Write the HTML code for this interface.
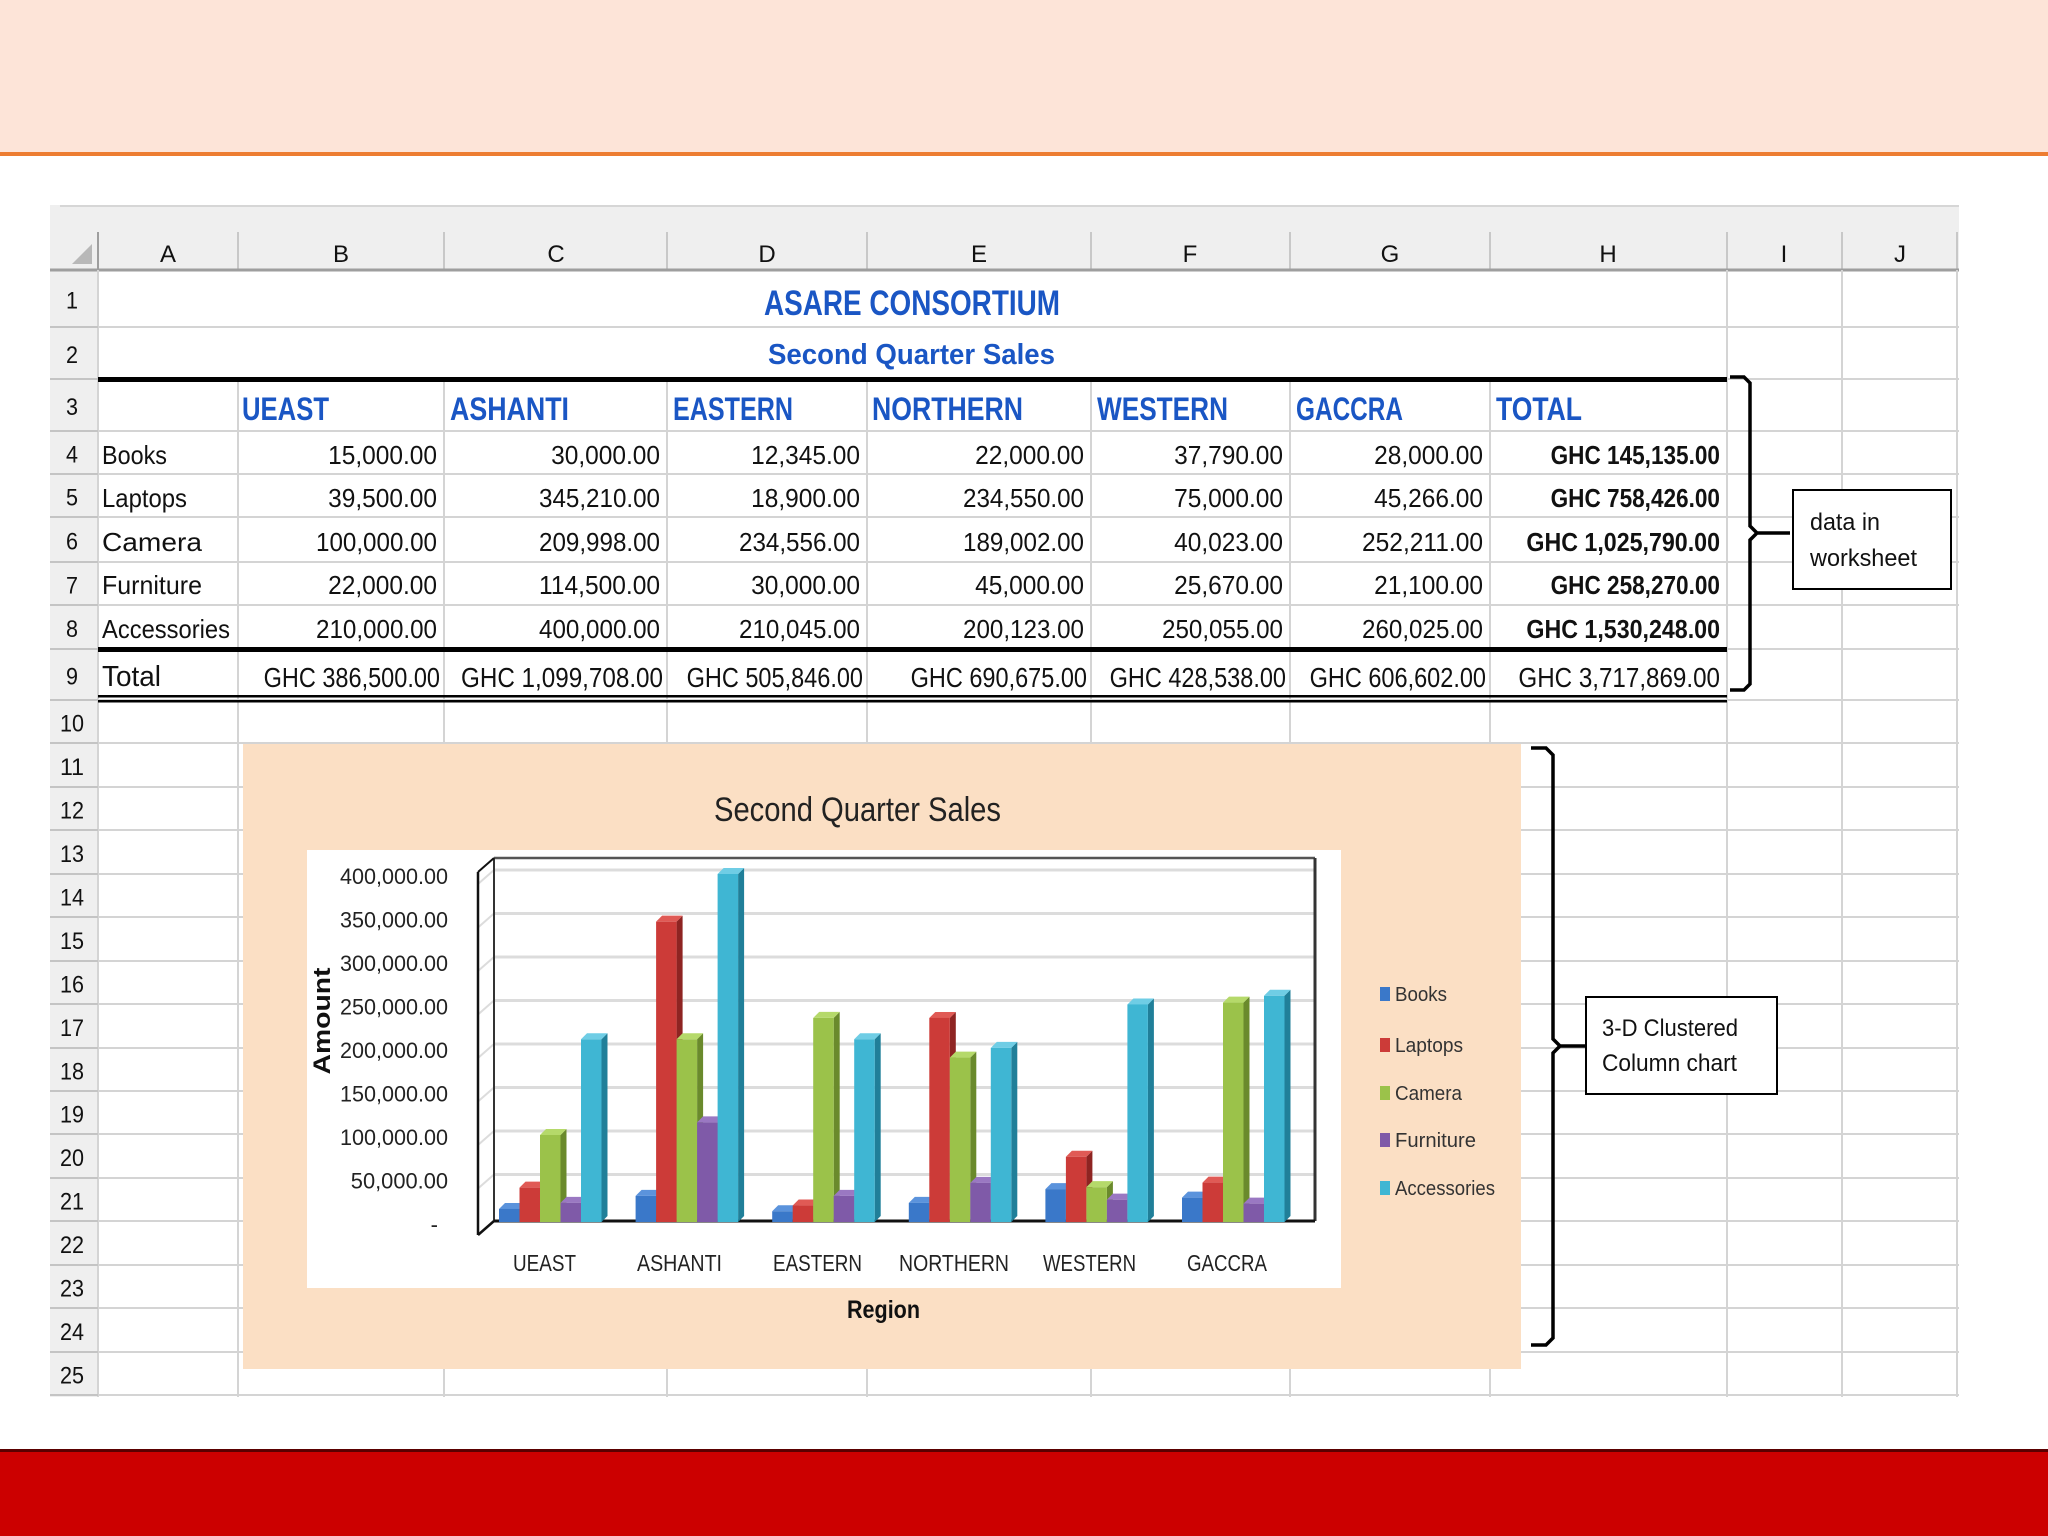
<!DOCTYPE html>
<html><head><meta charset="utf-8"><style>
html,body{margin:0;padding:0;width:2048px;height:1536px;overflow:hidden;background:#fff}
svg{display:block}
text{font-family:"Liberation Sans Narrow","Liberation Sans",sans-serif}
</style></head><body>
<svg id="s" width="2048" height="1536" viewBox="0 0 2048 1536" xmlns="http://www.w3.org/2000/svg">
<rect x="0" y="0" width="2048" height="153" fill="#fde4d8"/>
<rect x="0" y="152" width="2048" height="4" fill="#ed7d31"/>
<rect x="0" y="1450" width="2048" height="86" fill="#cc0000"/>
<rect x="0" y="1449" width="2048" height="3" fill="#5a0000"/>
<rect x="50" y="205" width="1909" height="65" fill="#efefef"/>
<rect x="50" y="270" width="48" height="1127" fill="#efefef"/>
<rect x="98" y="270" width="1861" height="1127" fill="#fff"/>
<polygon points="92,264 92,244 72,264" fill="#b8b8b8"/>
<g id="grid"></g>
<g font-size="24" fill="#111" text-anchor="middle">
<text x="168" y="262">A</text><text x="341" y="262">B</text><text x="556" y="262">C</text><text x="767" y="262">D</text><text x="979" y="262">E</text><text x="1190" y="262">F</text><text x="1390" y="262">G</text><text x="1608" y="262">H</text><text x="1784" y="262">I</text><text x="1900" y="262">J</text>
</g>
<g id="rownums" font-size="24" fill="#111" text-anchor="middle"></g>
<text x="764" y="315" font-size="35" font-weight="bold" fill="#1a56c4" textLength="296" lengthAdjust="spacingAndGlyphs">ASARE CONSORTIUM</text>
<text x="768" y="364" font-size="29" font-weight="bold" fill="#1a56c4" textLength="287" lengthAdjust="spacingAndGlyphs">Second Quarter Sales</text>
<g font-size="32" font-weight="bold" fill="#1a56c4">
<text x="242" y="420" textLength="87" lengthAdjust="spacingAndGlyphs">UEAST</text>
<text x="450" y="420" textLength="119" lengthAdjust="spacingAndGlyphs">ASHANTI</text>
<text x="673" y="420" textLength="120" lengthAdjust="spacingAndGlyphs">EASTERN</text>
<text x="872" y="420" textLength="151" lengthAdjust="spacingAndGlyphs">NORTHERN</text>
<text x="1097" y="420" textLength="131" lengthAdjust="spacingAndGlyphs">WESTERN</text>
<text x="1296" y="420" textLength="107" lengthAdjust="spacingAndGlyphs">GACCRA</text>
<text x="1496" y="420" textLength="86" lengthAdjust="spacingAndGlyphs">TOTAL</text>
</g>
<g font-size="26" fill="#111">
<text x="102" y="464" textLength="65" lengthAdjust="spacingAndGlyphs">Books</text>
<text x="102" y="507" textLength="85" lengthAdjust="spacingAndGlyphs">Laptops</text>
<text x="102" y="551" textLength="100" lengthAdjust="spacingAndGlyphs">Camera</text>
<text x="102" y="594" textLength="100" lengthAdjust="spacingAndGlyphs">Furniture</text>
<text x="102" y="638" textLength="128" lengthAdjust="spacingAndGlyphs">Accessories</text>
<text x="102" y="686" font-size="29" textLength="59" lengthAdjust="spacingAndGlyphs">Total</text>
</g>
<g id="nums" font-size="26" fill="#111" text-anchor="end"></g>
<rect x="243" y="744" width="1278" height="625" fill="#fbdfc4"/>
<rect x="307" y="850" width="1034" height="438" fill="#fff"/>
<text x="714" y="821" font-size="34" fill="#222" textLength="287" lengthAdjust="spacingAndGlyphs">Second Quarter Sales</text>
<g id="plot"></g>
<g font-size="22" fill="#222" text-anchor="end" id="ylab"></g>
<text x="0" y="0" font-size="24" font-weight="bold" fill="#111" text-anchor="middle" textLength="107" lengthAdjust="spacingAndGlyphs" transform="translate(330 1021) rotate(-90)">Amount</text>
<g font-size="23" fill="#222">
<text x="513" y="1271" textLength="63" lengthAdjust="spacingAndGlyphs">UEAST</text>
<text x="637" y="1271" textLength="85" lengthAdjust="spacingAndGlyphs">ASHANTI</text>
<text x="773" y="1271" textLength="89" lengthAdjust="spacingAndGlyphs">EASTERN</text>
<text x="899" y="1271" textLength="110" lengthAdjust="spacingAndGlyphs">NORTHERN</text>
<text x="1043" y="1271" textLength="93" lengthAdjust="spacingAndGlyphs">WESTERN</text>
<text x="1187" y="1271" textLength="80" lengthAdjust="spacingAndGlyphs">GACCRA</text>
</g>
<text x="847" y="1318" font-size="25" font-weight="bold" fill="#111" textLength="73" lengthAdjust="spacingAndGlyphs">Region</text>
<g font-size="20" fill="#333">
<rect x="1380" y="987" width="10" height="14" fill="#3a78c9"/><text x="1395" y="1001" textLength="52" lengthAdjust="spacingAndGlyphs">Books</text>
<rect x="1380" y="1038" width="10" height="14" fill="#cc3b38"/><text x="1395" y="1052" textLength="68" lengthAdjust="spacingAndGlyphs">Laptops</text>
<rect x="1380" y="1086" width="10" height="14" fill="#9bc24a"/><text x="1395" y="1100" textLength="67" lengthAdjust="spacingAndGlyphs">Camera</text>
<rect x="1380" y="1133" width="10" height="14" fill="#7f5aa8"/><text x="1395" y="1147" textLength="81" lengthAdjust="spacingAndGlyphs">Furniture</text>
<rect x="1380" y="1181" width="10" height="14" fill="#3fb6d3"/><text x="1395" y="1195" textLength="100" lengthAdjust="spacingAndGlyphs">Accessories</text>
</g>
<path d="M1730 377 L1744 377 L1750 383 L1750 526 L1757 533 L1790 533 M1757 533 L1750 540 L1750 684 L1744 690 L1730 690" fill="none" stroke="#000" stroke-width="3.5"/>
<rect x="1793" y="490" width="158" height="99" fill="#fff" stroke="#000" stroke-width="2"/>
<text x="1810" y="530" font-size="24" fill="#111" textLength="70" lengthAdjust="spacingAndGlyphs">data in</text>
<text x="1810" y="566" font-size="24" fill="#111" textLength="107" lengthAdjust="spacingAndGlyphs">worksheet</text>
<path d="M1531 748 L1546 748 L1553 755 L1553 1039 L1560 1046 L1585 1046 M1560 1046 L1553 1053 L1553 1338 L1546 1345 L1531 1345" fill="none" stroke="#000" stroke-width="3.5"/>
<rect x="1586" y="997" width="191" height="97" fill="#fff" stroke="#000" stroke-width="2"/>
<text x="1602" y="1036" font-size="24" fill="#111" textLength="136" lengthAdjust="spacingAndGlyphs">3-D Clustered</text>
<text x="1602" y="1071" font-size="24" fill="#111" textLength="135" lengthAdjust="spacingAndGlyphs">Column chart</text>
</svg>
<script>
(function(){
var NS="http://www.w3.org/2000/svg";
function el(p,t,a,txt){var e=document.createElementNS(NS,t);for(var k in a)e.setAttribute(k,a[k]);if(txt!=null)e.textContent=txt;p.appendChild(e);return e;}
var cols=[98,238,444,667,867,1091,1290,1490,1727,1842,1957];
var rows=[270,327,379,431,474,517,562,605,649,700];
for(var k=1;k<=16;k++)rows.push(Math.round(700+43.44*k));
var g=document.getElementById('grid');
cols.forEach(function(x){el(g,'line',{x1:x,y1:232,x2:x,y2:270,stroke:'#c8c8c8','stroke-width':2});});
el(g,'line',{x1:50,y1:270,x2:1959,y2:270,stroke:'#9e9e9e','stroke-width':3});
el(g,'line',{x1:98,y1:232,x2:98,y2:1397,stroke:'#9e9e9e','stroke-width':2});
el(g,'line',{x1:60,y1:206,x2:1959,y2:206,stroke:'#d6d6d6','stroke-width':2});
cols.forEach(function(x,i){var y0=(i>0&&i<8)?379:270;el(g,'line',{x1:x,y1:y0,x2:x,y2:1397,stroke:'#d4d4d4','stroke-width':2});});
rows.forEach(function(y,i){if(i==0)return;el(g,'line',{x1:98,y1:y,x2:1959,y2:y,stroke:'#d4d4d4','stroke-width':2});el(g,'line',{x1:50,y1:y,x2:98,y2:y,stroke:'#c4c4c4','stroke-width':2});});
el(g,'rect',{x:98,y:377,width:1629,height:5,fill:'#000'});
el(g,'rect',{x:98,y:647,width:1629,height:5,fill:'#000'});
el(g,'rect',{x:98,y:695,width:1629,height:2.5,fill:'#000'});
el(g,'rect',{x:98,y:700,width:1629,height:2.5,fill:'#000'});
var rn=document.getElementById('rownums');
for(var i=0;i<rows.length-1;i++){el(rn,'text',{x:72,y:(rows[i]+rows[i+1])/2+10,textLength:String(i+1).length*12,lengthAdjust:'spacingAndGlyphs'},String(i+1));}
var data=[
["15,000.00","30,000.00","12,345.00","22,000.00","37,790.00","28,000.00","GHC 145,135.00"],
["39,500.00","345,210.00","18,900.00","234,550.00","75,000.00","45,266.00","GHC 758,426.00"],
["100,000.00","209,998.00","234,556.00","189,002.00","40,023.00","252,211.00","GHC 1,025,790.00"],
["22,000.00","114,500.00","30,000.00","45,000.00","25,670.00","21,100.00","GHC 258,270.00"],
["210,000.00","400,000.00","210,045.00","200,123.00","250,055.00","260,025.00","GHC 1,530,248.00"],
["GHC 386,500.00","GHC 1,099,708.00","GHC 505,846.00","GHC 690,675.00","GHC 428,538.00","GHC 606,602.00","GHC 3,717,869.00"]];
var bl=[464,507,551,594,638,687];
var ng=document.getElementById('nums');
data.forEach(function(r,ri){r.forEach(function(s,ci){var right=cols[ci+2]-7;if(ri==5&&ci<6)right=cols[ci+2]-4;
var w=s.length*(ri==5?12.6:12.1);if(ri==5&&ci==1)w=202;
var a={x:right,y:bl[ri],textLength:w,lengthAdjust:'spacingAndGlyphs','font-size':ri==5?28:26};
if(ci==6&&ri<5)a['font-weight']='bold';
el(ng,'text',a,s);});});
var p=document.getElementById('plot');
var z=1222,st=43.5;
for(var k=1;k<=8;k++){var y=z-k*st-4;el(p,'line',{x1:494,y1:y,x2:1314,y2:y,stroke:'#dcdcdc','stroke-width':3});el(p,'line',{x1:478,y1:y+14,x2:494,y2:y,stroke:'#dcdcdc','stroke-width':2});}
el(p,'line',{x1:494,y1:858,x2:1315,y2:858,stroke:'#555','stroke-width':2.5});
el(p,'line',{x1:1315,y1:858,x2:1315,y2:1221,stroke:'#333','stroke-width':3});
el(p,'line',{x1:494,y1:858,x2:494,y2:1221,stroke:'#333','stroke-width':2});
el(p,'line',{x1:494,y1:1221,x2:1315,y2:1221,stroke:'#111','stroke-width':3});
el(p,'line',{x1:478,y1:872,x2:478,y2:1235,stroke:'#111','stroke-width':2.5});
el(p,'line',{x1:478,y1:872,x2:494,y2:858,stroke:'#111','stroke-width':2});
el(p,'line',{x1:478,y1:1235,x2:494,y2:1221,stroke:'#111','stroke-width':2.5});
var vals=[[15000,30000,12345,22000,37790,28000],[39500,345210,18900,234550,75000,45266],[100000,209998,234556,189002,40023,252211],[22000,114500,30000,45000,25670,21100],[210000,400000,210045,200123,250055,260025]];
var cf=['#3a78c9','#cc3b38','#9bc24a','#7f5aa8','#3fb6d3'],cs=['#1f4f8f','#8e2422','#6a8a2c','#55397a','#207f99'],ct=['#5b93dc','#e05a55','#b5d96a','#9a78c2','#6fcde5'];
for(var gi=0;gi<6;gi++){for(var j=0;j<5;j++){var bx=499+136.6*gi+20.5*j,bw=20.5,bd=6;var bt=z-vals[j][gi]/50000*st;
el(p,'polygon',{points:[bx+bw,bt,bx+bw+bd,bt-bd,bx+bw+bd,z-bd,bx+bw,z].join(' '),fill:cs[j]});
el(p,'polygon',{points:[bx,bt,bx+bd,bt-bd,bx+bw+bd,bt-bd,bx+bw,bt].join(' '),fill:ct[j]});
el(p,'rect',{x:bx,y:bt,width:bw,height:z-bt,fill:cf[j]});}}
var yl=document.getElementById('ylab');
var labs=['-','50,000.00','100,000.00','150,000.00','200,000.00','250,000.00','300,000.00','350,000.00','400,000.00'];
labs.forEach(function(s,k){var y=1224-k*43.5+8;var a={x:448,y:y};if(k>0){a.textLength=s.length*10.8;a.lengthAdjust='spacingAndGlyphs';}else{a.x=438;}el(yl,'text',a,s);});
})();
</script>
</body></html>
